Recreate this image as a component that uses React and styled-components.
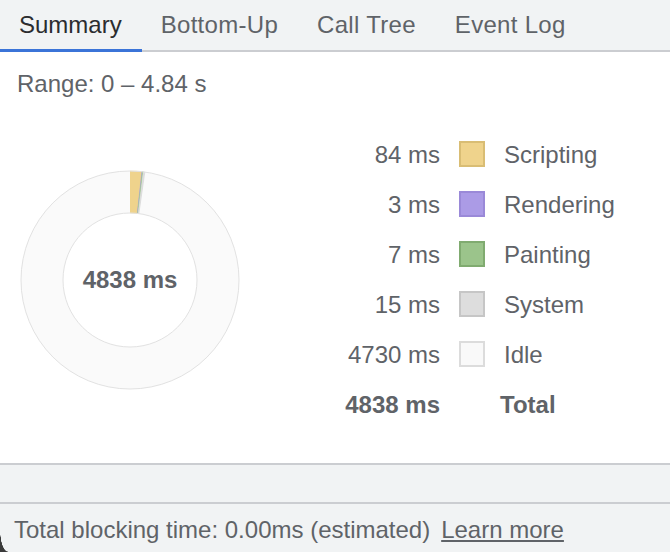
import React from "react";
import styled, { createGlobalStyle } from "styled-components";

const GlobalStyle = createGlobalStyle`
  html, body {
    margin: 0;
    padding: 0;
    background: #f1f3f4;
  }
  body {
    font-family: "Liberation Sans", Arial, sans-serif;
    font-size: 24px;
    color: #5f6368;
    overflow: hidden;
  }
`;

const Window = styled.div`
  position: relative;
  width: 670px;
  height: 552px;
  display: flex;
  flex-direction: column;
  background: #f1f3f4;
  overflow: hidden;
`;

const TabBar = styled.div`
  display: flex;
  align-items: stretch;
  height: 52px;
  box-sizing: border-box;
  background: #f1f3f4;
  border-bottom: 2px solid #cbcdd1;
`;

const Tab = styled.div`
  position: relative;
  display: flex;
  align-items: center;
  padding: 0 20px 0 19px;
  color: ${(p) => (p.$active ? "#2b2c2f" : "#5f6368")};
  letter-spacing: ${(p) => (p.$active ? "0" : "0.3px")};
  white-space: nowrap;

  &::after {
    content: "";
    display: ${(p) => (p.$active ? "block" : "none")};
    position: absolute;
    left: 0;
    right: 0;
    bottom: -2px;
    height: 3px;
    background: #3b74d8;
  }
`;

const Main = styled.div`
  height: 411px;
  box-sizing: border-box;
  background: #ffffff;
  padding: 18px 0 0 17px;
  display: flex;
  flex-direction: column;
`;

const RangeLine = styled.div`
  line-height: 28px;
  height: 28px;
`;

const SummaryRow = styled.div`
  margin-top: 32px;
  display: flex;
  align-items: center;
  height: 300px;
`;

const ChartBox = styled.div`
  position: relative;
  width: 220px;
  height: 220px;
  margin-left: 3px;
  flex: none;
`;

const CenterLabel = styled.div`
  position: absolute;
  inset: 0;
  display: flex;
  align-items: center;
  justify-content: center;
  font-weight: bold;
  color: #5f6368;
`;

const Legend = styled.div`
  margin-left: 80px;
  display: grid;
  grid-template-columns: 120px 26px auto;
  grid-auto-rows: 50px;
  column-gap: 19px;
  align-items: center;
`;

const Value = styled.div`
  text-align: right;
  font-weight: ${(p) => (p.$bold ? "bold" : "normal")};
  white-space: nowrap;
`;

const Swatch = styled.div`
  width: 26px;
  height: 26px;
  box-sizing: border-box;
  background: ${(p) => p.$fill};
  border: 2px solid ${(p) => p.$border};
  margin-top: -3px;
`;

const Label = styled.div`
  white-space: nowrap;
  font-weight: ${(p) => (p.$bold ? "bold" : "normal")};
  margin-left: ${(p) => (p.$bold ? "-4px" : "0")};
`;

const Band = styled.div`
  height: 37px;
  background: #f1f3f4;
  border-top: 2px solid #cbcdd1;
  border-bottom: 2px solid #cbcdd1;
`;

const Footer = styled.div`
  flex: 1;
  background: #f1f3f4;
  padding: 12px 0 0 14px;
  line-height: 28px;
  white-space: nowrap;
`;

const Link = styled.a`
  color: #5f6368;
  text-decoration: underline;
  margin-left: 11px;
  cursor: pointer;
`;

const Corner = styled.div`
  position: absolute;
  left: 0;
  bottom: 0;
  width: 8px;
  height: 22px;
  background: radial-gradient(ellipse 8px 22px at 100% 0, transparent 96%, #3a3a3a 100%);
`;

const items = [
  { value: 84, label: "Scripting", fill: "#efd38c", border: "#d9bd74" },
  { value: 3, label: "Rendering", fill: "#ab9be6", border: "#9a89d8" },
  { value: 7, label: "Painting", fill: "#9bc48b", border: "#80ab70" },
  { value: 15, label: "System", fill: "#dddddd", border: "#c6c6c6" },
  { value: 4730, label: "Idle", fill: "#f9f9f9", border: "#dcdcdc" },
];

function slicePath(cx, cy, r1, r2, a0, a1) {
  const p = (r, a) => [cx + r * Math.sin(a), cy - r * Math.cos(a)];
  const large = a1 - a0 > Math.PI ? 1 : 0;
  const [x0, y0] = p(r2, a0);
  const [x1, y1] = p(r2, a1);
  const [x2, y2] = p(r1, a1);
  const [x3, y3] = p(r1, a0);
  return `M${x0} ${y0} A${r2} ${r2} 0 ${large} 1 ${x1} ${y1} L${x2} ${y2} A${r1} ${r1} 0 ${large} 0 ${x3} ${y3} Z`;
}

function Donut() {
  const total = items.reduce((s, i) => s + i.value, 0);
  let acc = 0;
  const cx = 110, cy = 110, ro = 109, ri = 67;
  return (
    <svg width="220" height="220" viewBox="0 0 220 220">
      <circle cx={cx} cy={cy} r={(ro + ri) / 2} fill="none" stroke="#fafafa" strokeWidth={ro - ri} />
      {items.map((it) => {
        const a0 = (acc / total) * Math.PI * 2;
        acc += it.value;
        const a1 = (acc / total) * Math.PI * 2;
        const fill = it.label === "Idle" ? "#fafafa" : it.fill;
        return <path key={it.label} d={slicePath(cx, cy, ri, ro, a0, a1)} fill={fill} stroke={it.label === "Idle" ? "none" : fill} strokeWidth="0.5" />;
      })}
      <circle cx={cx} cy={cy} r={ro} fill="none" stroke="#e2e2e2" strokeWidth="1" />
      <circle cx={cx} cy={cy} r={ri} fill="none" stroke="#e2e2e2" strokeWidth="1" />
    </svg>
  );
}

export default function App() {
  const tabs = ["Summary", "Bottom-Up", "Call Tree", "Event Log"];
  return (
    <Window>
      <GlobalStyle />
      <TabBar>
        {tabs.map((t, i) => (
          <Tab key={t} $active={i === 0}>{t}</Tab>
        ))}
      </TabBar>
      <Main>
        <RangeLine>Range: 0 – 4.84 s</RangeLine>
        <SummaryRow>
          <ChartBox>
            <Donut />
            <CenterLabel>4838 ms</CenterLabel>
          </ChartBox>
          <Legend>
            {items.map((it) => (
              <React.Fragment key={it.label}>
                <Value>{it.value} ms</Value>
                <Swatch $fill={it.fill} $border={it.border} />
                <Label>{it.label}</Label>
              </React.Fragment>
            ))}
            <Value $bold>4838 ms</Value>
            <div />
            <Label $bold>Total</Label>
          </Legend>
        </SummaryRow>
      </Main>
      <Band />
      <Footer>
        Total blocking time: 0.00ms (estimated)
        <Link>Learn more</Link>
      </Footer>
      <Corner />
    </Window>
  );
}
